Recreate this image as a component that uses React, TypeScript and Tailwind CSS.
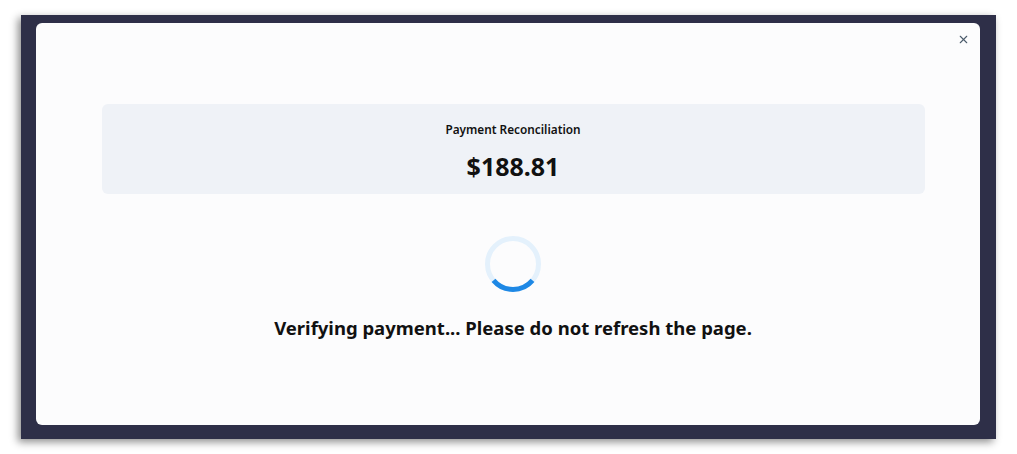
import { X } from "lucide-react";

export default function App() {
  return (
    <div className="h-[454px] w-[1017px] bg-white pl-[21px] pt-[15px] font-['Noto_Sans',sans-serif]">
      <div className="h-[424px] w-[975px] bg-[#2e2f48] pl-[15px] pt-[8px] shadow-[-3px_3px_8px_rgba(0,0,0,0.45)]">
        <div className="relative flex h-[402px] w-[944px] flex-col items-center rounded-[6px] bg-[#fcfcfd] pl-[10px] pt-[81px]">
          <button
            type="button"
            className="absolute right-[10px] top-[10px] text-[#4b5b6b]"
          >
            <X className="size-[13px]" strokeWidth={2} />
          </button>

          <div className="flex h-[90px] w-[823px] flex-col items-center rounded-[6px] bg-[#eff2f7] pt-[16px]">
            <p className="text-[11.8px] font-semibold leading-[18px] text-[#111]">
              Payment Reconciliation
            </p>
            <p className="mt-[12px] text-[25px] font-bold leading-[32px] text-[#111]">
              $188.81
            </p>
          </div>

          <svg className="mt-[42px] size-[56px]" viewBox="0 0 56 56">
            <circle
              cx="28"
              cy="28"
              r="25.5"
              fill="none"
              stroke="#e4f1fc"
              strokeWidth="5"
            />
            <path
              d="M 8.5 44.4 A 25.5 25.5 0 0 0 47.5 44.4"
              fill="none"
              stroke="#1e88e5"
              strokeWidth="5"
            />
          </svg>

          <p className="mt-[22px] text-[18.5px] font-bold leading-[28px] text-[#111]">
            Verifying payment... Please do not refresh the page.
          </p>
        </div>
      </div>
    </div>
  );
}
